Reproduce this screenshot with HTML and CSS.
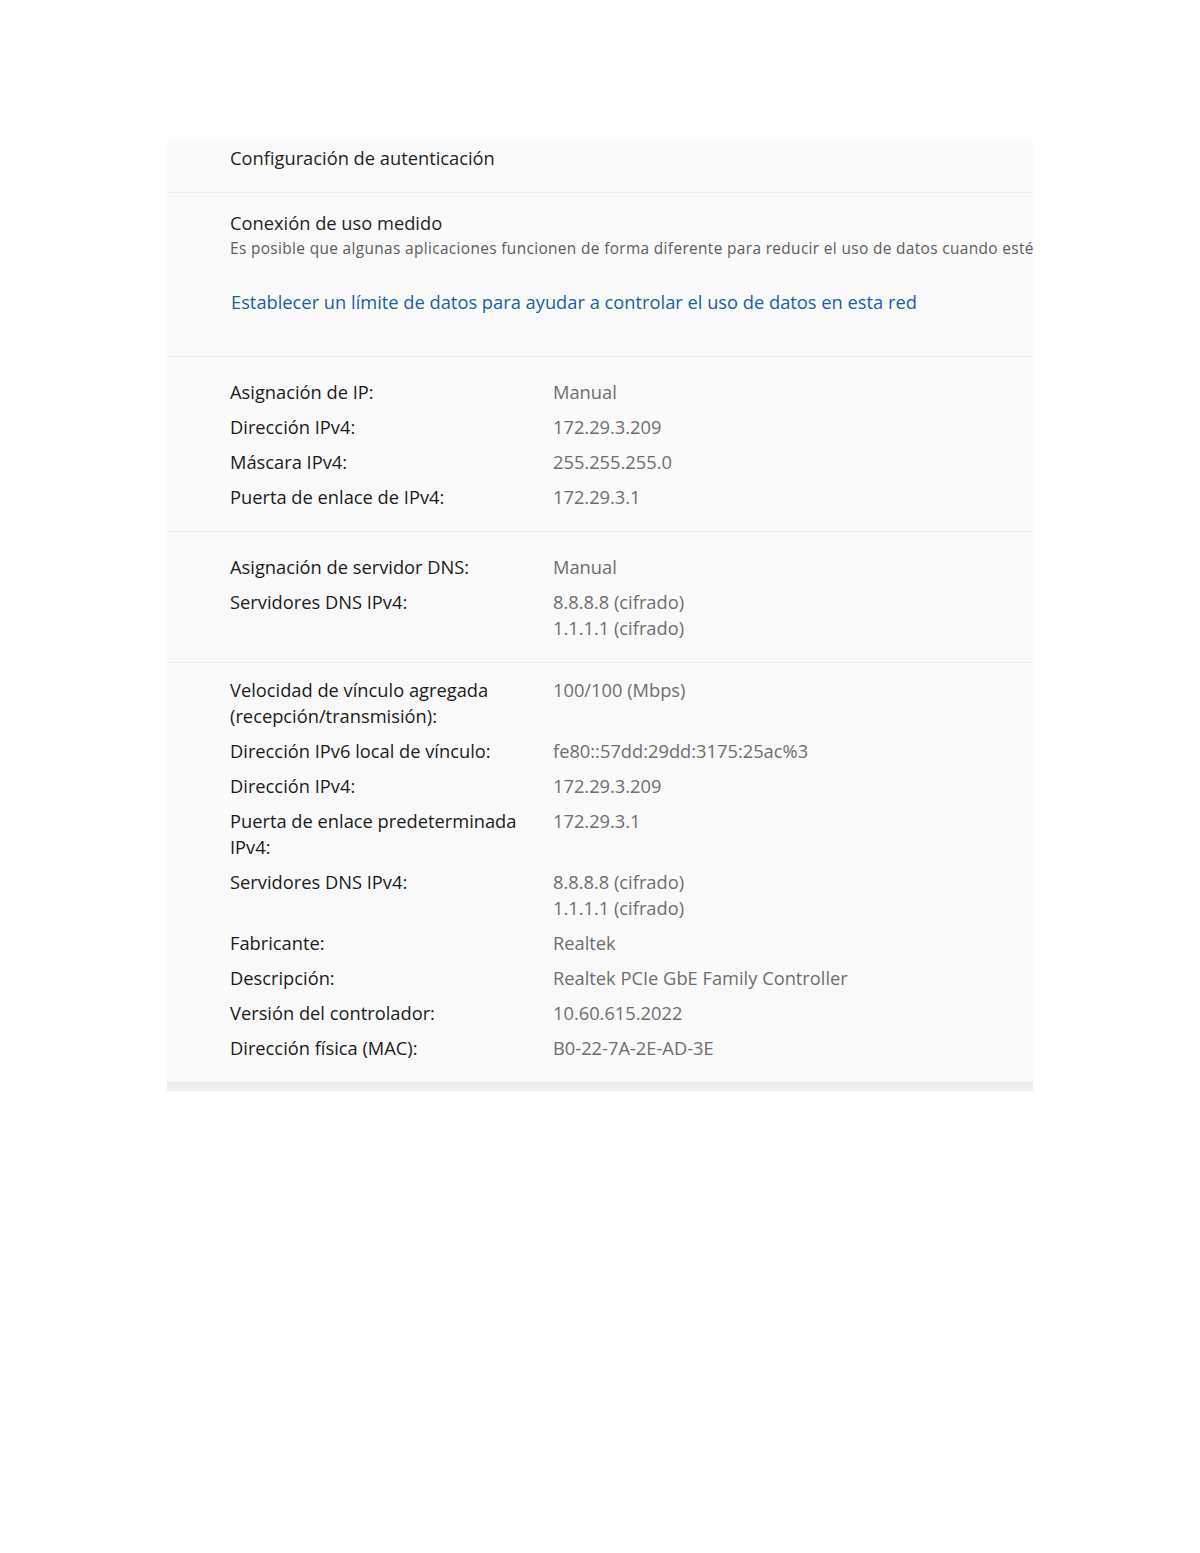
FILE: index.html
```html
<!DOCTYPE html>
<html lang="es">
<head>
<meta charset="utf-8">
<title>Propiedades de red</title>
<link rel="stylesheet" href="styles.css">
</head>
<body>
<div class="panel">
  <section class="sec sec-auth">
    <div class="title">Configuración de autenticación</div>
  </section>
  <section class="sec sec-metered">
    <div class="title">Conexión de uso medido</div>
    <div class="subtitle">Es posible que algunas aplicaciones funcionen de forma diferente para reducir el uso de datos cuando esté</div>
    <div class="link">Establecer un límite de datos para ayudar a controlar el uso de datos en esta red</div>
  </section>
  <section class="sec props sec-ip">
    <div class="lbl">Asignación de IP:</div><div class="val">Manual</div>
    <div class="lbl">Dirección IPv4:</div><div class="val">172.29.3.209</div>
    <div class="lbl">Máscara IPv4:</div><div class="val">255.255.255.0</div>
    <div class="lbl">Puerta de enlace de IPv4:</div><div class="val">172.29.3.1</div>
  </section>
  <section class="sec props sec-dns">
    <div class="lbl">Asignación de servidor DNS:</div><div class="val">Manual</div>
    <div class="lbl">Servidores DNS IPv4:</div><div class="val">8.8.8.8 (cifrado)<br>1.1.1.1 (cifrado)</div>
  </section>
  <section class="sec props sec-hw">
    <div class="lbl">Velocidad de vínculo agregada<br>(recepción/transmisión):</div><div class="val">100/100 (Mbps)</div>
    <div class="lbl">Dirección IPv6 local de vínculo:</div><div class="val">fe80::57dd:29dd:3175:25ac%3</div>
    <div class="lbl">Dirección IPv4:</div><div class="val">172.29.3.209</div>
    <div class="lbl">Puerta de enlace predeterminada<br>IPv4:</div><div class="val">172.29.3.1</div>
    <div class="lbl">Servidores DNS IPv4:</div><div class="val">8.8.8.8 (cifrado)<br>1.1.1.1 (cifrado)</div>
    <div class="lbl">Fabricante:</div><div class="val">Realtek</div>
    <div class="lbl">Descripción:</div><div class="val">Realtek PCIe GbE Family Controller</div>
    <div class="lbl">Versión del controlador:</div><div class="val">10.60.615.2022</div>
    <div class="lbl">Dirección física (MAC):</div><div class="val">B0-22-7A-2E-AD-3E</div>
  </section>
  <div class="bottom"></div>
</div>
</body>
</html>
```

FILE: styles.css
```css
html, body {
  margin: 0;
  padding: 0;
  background: #ffffff;
}
body {
  font-family: "Open Sans", "Noto Sans", sans-serif;
  color: #1b1b1b;
  padding-top: 139px;
}
.panel {
  margin-left: 167px;
  width: 866px;
  background: #fafafa;
  overflow: hidden;
}
.sec {
  border-bottom: 1px solid #efefef;
  padding-left: 63px;
}
.title {
  font-size: 18.3px;
  line-height: 26px;
  white-space: nowrap;
  color: #1f1f1f;
}
.sec-auth {
  padding-top: 6px;
  padding-bottom: 21px;
}
.sec-metered {
  padding-top: 17px;
  padding-bottom: 41px;
}
.subtitle {
  font-size: 15.4px;
  line-height: 20px;
  letter-spacing: 0.36px;
  color: #5c5c5c;
  white-space: nowrap;
  margin-top: 3px;
}
.link {
  font-size: 18.3px;
  line-height: 26px;
  color: #1a5cad;
  margin-top: 30px;
  padding-left: 1px;
  white-space: nowrap;
}
.props {
  display: grid;
  grid-template-columns: 323px 1fr;
  row-gap: 9px;
  font-size: 18.3px;
  line-height: 26px;
}
.lbl {
  color: #1b1b1b;
}
.val {
  color: #6e6e6e;
  white-space: nowrap;
}
.sec-ip {
  padding-top: 22px;
  padding-bottom: 21px;
}
.sec-dns {
  padding-top: 22px;
  padding-bottom: 21px;
}
.sec-hw {
  padding-top: 14px;
  padding-bottom: 21px;
  border-bottom: none;
}
.bottom {
  height: 8px;
  background: #efefef;
  border-top: 1px solid #e8e8e8;
}
```
